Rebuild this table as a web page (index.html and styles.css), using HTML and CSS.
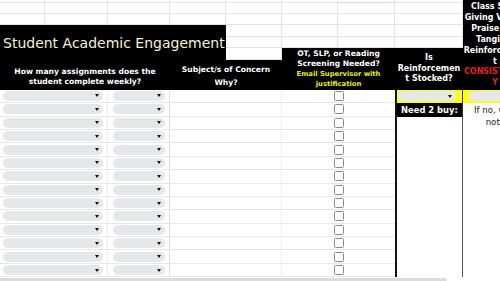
FILE: index.html
```html
<!DOCTYPE html>
<html>
<head>
<meta charset="utf-8">
<link rel="stylesheet" href="styles.css">
</head>
<body>
<div class="sheet">
  <div class="blk title">Student Academic Engagement</div>
  <div class="blk hdr-left">How many assignments does the<br>student complete weekly?</div>
  <div class="blk hdr-subj">Subject/s of Concern<br>Why?</div>
  <div class="blk hdr-ot">OT, SLP, or Reading<br>Screening Needed?<br><span class="yel">Email Supervisor with<br>justification</span></div>
  <div class="blk hdr-is">Is<br>Reinforcemen<br>t Stocked?</div>
  <div class="blk hdr-right">Class Staff<br>Giving Verbal<br>Praise and<br>Tangible<br>Reinforcemen<br>t<br><span class="red">CONSISTENTL<br>Y</span></div>

  <div class="ycell ycell-a"><span class="pill"><i class="arr"></i></span></div>
  <div class="ycell ycell-b"><span class="pill"><i class="arr"></i></span></div>
  <div class="need">Need 2 buy:</div>
  <div class="stock-body"></div>
  <div class="why-body">If no, why<br>not?</div>

  <!-- top grid cells -->
  <div class="c"></div><div class="c"></div><div class="c"></div><div class="c"></div><div class="c"></div><div class="c"></div><div class="c sel"></div><div class="c"></div>
  <div class="c"></div><div class="c"></div><div class="c"></div><div class="c"></div><div class="c"></div><div class="c"></div><div class="c"></div><div class="c"></div>
  <div class="c"></div><div class="c"></div><div class="c"></div><div class="c"></div><div class="c"></div><div class="c"></div><div class="c"></div><div class="c"></div>
  <div class="c"></div><div class="c"></div><div class="c"></div><div class="c"></div>
  <div class="c"></div><div class="c"></div><div class="c"></div><div class="c"></div>
  <div class="c"></div>

  <!-- data rows -->
  <div class="d dd1"><span class="pill"><i class="arr"></i></span></div><div class="d dd2"><span class="pill"><i class="arr"></i></span></div><div class="d subj"></div><div class="d chk"><span class="box"></span></div>
  <div class="d dd1"><span class="pill"><i class="arr"></i></span></div><div class="d dd2"><span class="pill"><i class="arr"></i></span></div><div class="d subj"></div><div class="d chk"><span class="box"></span></div>
  <div class="d dd1"><span class="pill"><i class="arr"></i></span></div><div class="d dd2"><span class="pill"><i class="arr"></i></span></div><div class="d subj"></div><div class="d chk"><span class="box"></span></div>
  <div class="d dd1"><span class="pill"><i class="arr"></i></span></div><div class="d dd2"><span class="pill"><i class="arr"></i></span></div><div class="d subj"></div><div class="d chk"><span class="box"></span></div>
  <div class="d dd1"><span class="pill"><i class="arr"></i></span></div><div class="d dd2"><span class="pill"><i class="arr"></i></span></div><div class="d subj"></div><div class="d chk"><span class="box"></span></div>
  <div class="d dd1"><span class="pill"><i class="arr"></i></span></div><div class="d dd2"><span class="pill"><i class="arr"></i></span></div><div class="d subj"></div><div class="d chk"><span class="box"></span></div>
  <div class="d dd1"><span class="pill"><i class="arr"></i></span></div><div class="d dd2"><span class="pill"><i class="arr"></i></span></div><div class="d subj"></div><div class="d chk"><span class="box"></span></div>
  <div class="d dd1"><span class="pill"><i class="arr"></i></span></div><div class="d dd2"><span class="pill"><i class="arr"></i></span></div><div class="d subj"></div><div class="d chk"><span class="box"></span></div>
  <div class="d dd1"><span class="pill"><i class="arr"></i></span></div><div class="d dd2"><span class="pill"><i class="arr"></i></span></div><div class="d subj"></div><div class="d chk"><span class="box"></span></div>
  <div class="d dd1"><span class="pill"><i class="arr"></i></span></div><div class="d dd2"><span class="pill"><i class="arr"></i></span></div><div class="d subj"></div><div class="d chk"><span class="box"></span></div>
  <div class="d dd1"><span class="pill"><i class="arr"></i></span></div><div class="d dd2"><span class="pill"><i class="arr"></i></span></div><div class="d subj"></div><div class="d chk"><span class="box"></span></div>
  <div class="d dd1"><span class="pill"><i class="arr"></i></span></div><div class="d dd2"><span class="pill"><i class="arr"></i></span></div><div class="d subj"></div><div class="d chk"><span class="box"></span></div>
  <div class="d dd1"><span class="pill"><i class="arr"></i></span></div><div class="d dd2"><span class="pill"><i class="arr"></i></span></div><div class="d subj"></div><div class="d chk"><span class="box"></span></div>
  <div class="d dd1"><span class="pill"><i class="arr"></i></span></div><div class="d dd2"><span class="pill"><i class="arr"></i></span></div><div class="d subj"></div><div class="d chk"><span class="box"></span></div>
</div>
<div class="hscroll"></div>
</body>
</html>
```

FILE: styles.css
```css
html, body {
  margin: 0;
  padding: 0;
  background: #fff;
  overflow: hidden;
  width: 500px;
  height: 281px;
}
body {
  position: relative;
  font-family: "DejaVu Sans", sans-serif;
}
.sheet {
  display: grid;
  width: 527px;
  grid-template-columns: 45px 63px 62px 56px 56px 56px 57px 68px 64px;
  grid-template-rows: 3px 10.5px 11.7px 11.7px 11.6px 11.8px 29.5px repeat(14, 13.4px);
}
.c {
  box-sizing: border-box;
  border-right: 1px solid #e3e3e3;
  border-bottom: 1px solid #e3e3e3;
}
.c.sel {
  border-bottom-color: #c9d9f3;
}
.blk {
  background: #000;
  color: #fff;
  text-align: center;
  font-weight: bold;
  font-size: 7.6px;
  line-height: 10.4px;
}
.title {
  grid-column: 1 / 5;
  grid-row: 4 / 7;
  font-weight: normal;
  font-size: 14px;
  color: #f6f1d3;
  text-align: left;
  display: flex;
  align-items: center;
  padding-left: 3px;
  white-space: nowrap;
}
.hdr-left {
  grid-column: 1 / 4;
  grid-row: 7;
  display: flex;
  align-items: flex-end;
  justify-content: center;
  padding-bottom: 2px;
}
.hdr-subj {
  grid-column: 4 / 6;
  grid-row: 7;
  line-height: 13px;
  padding-top: 3px;
}
.hdr-ot {
  grid-column: 6 / 8;
  grid-row: 6 / 8;
  line-height: 10px;
  padding-top: 0.5px;
}
.yel {
  color: #ecec10;
  font-size: 6.8px;
  line-height: 9.3px;
}
.hdr-is {
  grid-column: 8;
  grid-row: 6 / 8;
  display: flex;
  align-items: center;
  justify-content: center;
  line-height: 10.6px;
  font-size: 8px;
}
.hdr-right {
  grid-column: 9;
  grid-row: 1 / 8;
  font-size: 8px;
  line-height: 10.9px;
  padding-top: 2px;
  white-space: nowrap;
}
.red {
  color: #e42222;
}
.d {
  box-sizing: border-box;
  border-bottom: 1px solid #e7e7e7;
  display: flex;
  align-items: center;
}
.dd1 {
  grid-column: span 2;
  border-right: 1px solid #efefef;
  padding: 0 4px 0 3px;
}
.dd2 {
  border-right: 1px solid #dedede;
  padding: 0 4px 0 5px;
}
.subj {
  grid-column: span 2;
  border-right: 1px solid #eeeeee;
}
.chk {
  grid-column: span 2;
  justify-content: center;
}
.pill {
  flex: 1;
  height: 10px;
  border-radius: 5px;
  background: #e6e7e9;
  display: flex;
  align-items: center;
  justify-content: flex-end;
  padding-right: 4px;
}
.arr {
  width: 0;
  height: 0;
  border-left: 2.5px solid transparent;
  border-right: 2.5px solid transparent;
  border-top: 3px solid #111;
}
.box {
  box-sizing: border-box;
  width: 10px;
  height: 10px;
  border: 1.5px solid #8a8a8a;
  border-radius: 1.5px;
}
.ycell {
  grid-row: 8;
  background: #ffff1a;
  box-sizing: border-box;
  display: flex;
  align-items: center;
}
.ycell-a {
  grid-column: 8;
  border-left: 2px solid #111;
  border-right: 1px solid #333;
  padding: 0 6px 0 1px;
}
.ycell-b {
  grid-column: 9;
  padding: 0 4px 0 6px;
}
.need {
  grid-column: 8;
  grid-row: 9;
  box-sizing: border-box;
  background: #000;
  color: #fff;
  font-size: 8.4px;
  font-weight: bold;
  display: flex;
  align-items: center;
  justify-content: center;
  border-left: 2px solid #111;
  border-right: 1px solid #333;
  white-space: nowrap;
}
.stock-body {
  grid-column: 8;
  grid-row: 10 / 22;
  box-sizing: border-box;
  border-left: 2px solid #111;
  border-right: 1px solid #555;
  background: #fff;
}
.why-body {
  grid-column: 9;
  grid-row: 9 / 22;
  text-align: center;
  font-size: 8.6px;
  line-height: 11.5px;
  color: #222;
  padding-top: 2px;
  white-space: nowrap;
}
.hscroll {
  position: absolute;
  left: 0;
  bottom: 0;
  width: 447px;
  height: 3px;
  background: #dadada;
  border-radius: 0 2px 2px 0;
}
```
